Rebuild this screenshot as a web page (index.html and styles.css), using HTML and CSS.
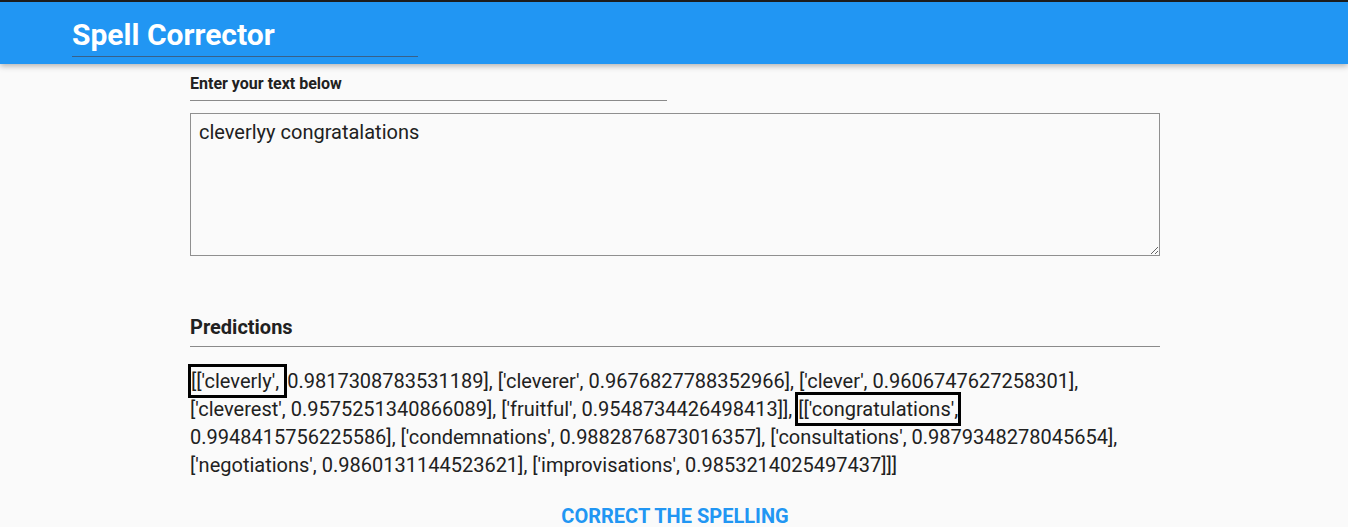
FILE: index.html
```html
<!DOCTYPE html>
<html lang="en">
<head>
    <meta charset="UTF-8">
    <meta name="viewport" content="width=device-width, initial-scale=1.0">
    <title>Spell Corrector</title>
    <link rel="stylesheet" href="styles.css">
</head>
<body>
    <header class="topbar">
        <h1 class="brand">Spell Corrector</h1>
    </header>
    <main class="content">
        <label class="input-label" for="text">Enter your text below</label>
        <textarea class="text-input" id="text" spellcheck="false">cleverlyy congratalations</textarea>

        <h2 class="section-title">Predictions</h2>
        <p class="predictions"><span class="hit">[['cleverly', </span>0.9817308783531189], ['cleverer', 0.9676827788352966], ['clever', 0.9606747627258301], ['cleverest', 0.9575251340866089], ['fruitful', 0.9548734426498413]], <span class="hit">[['congratulations', </span>0.9948415756225586], ['condemnations', 0.9882876873016357], ['consultations', 0.9879348278045654], ['negotiations', 0.9860131144523621], ['improvisations', 0.9853214025497437]]]</p>

        <button class="correct">CORRECT THE SPELLING</button>
    </main>
</body>
</html>
```

FILE: styles.css
```css
body {
    margin: 0;
    padding-left: 2px;
    background-color: #fafafa;
    font-family: Roboto, "Liberation Sans", sans-serif;
    color: #212121;
}
.topbar {
    height: 62px;
    margin-left: -2px;
    border-top: 2px solid #1c1c1c;
    background-color: #2196f3;
    box-shadow: 0 2px 6px rgba(0, 0, 0, 0.3);
    padding-left: 72px;
}
.brand {
    margin: 0;
    width: 346px;
    padding-top: 15px;
    padding-bottom: 4px;
    border-bottom: 1px solid #37618a;
    font-size: 30px;
    font-weight: 700;
    line-height: 35px;
    color: #fff;
}
.content {
    width: 970px;
    margin: 0 auto;
    padding-top: 10px;
    display: flex;
    flex-direction: column;
}
.input-label {
    width: 477px;
    font-size: 16px;
    font-weight: 700;
    line-height: 20px;
    padding-bottom: 6px;
    border-bottom: 1px solid #8a8a8a;
}
.text-input {
    margin-top: 12px;
    height: 143px;
    box-sizing: border-box;
    padding: 6px 8px;
    border: 1px solid #8f8f8f;
    border-radius: 0;
    background: #fafafa;
    font-family: Roboto, "Liberation Sans", sans-serif;
    font-size: 20px;
    color: #212121;
    resize: vertical;
}
.section-title {
    margin: 60px 0 0;
    padding-bottom: 8px;
    border-bottom: 1px solid #8a8a8a;
    font-size: 20px;
    font-weight: 700;
    line-height: 22px;
}
.predictions {
    margin: 20px 0 0;
    font-size: 20px;
    line-height: 28px;
}
.hit {
    border: 3px solid #000;
    padding: 2px 0;
    margin-left: -2px;
}
.correct {
    align-self: center;
    margin-top: 25px;
    padding: 0;
    border: none;
    background: none;
    font-family: Roboto, "Liberation Sans", sans-serif;
    font-size: 20px;
    font-weight: 700;
    color: #2196f3;
    cursor: pointer;
}
```
